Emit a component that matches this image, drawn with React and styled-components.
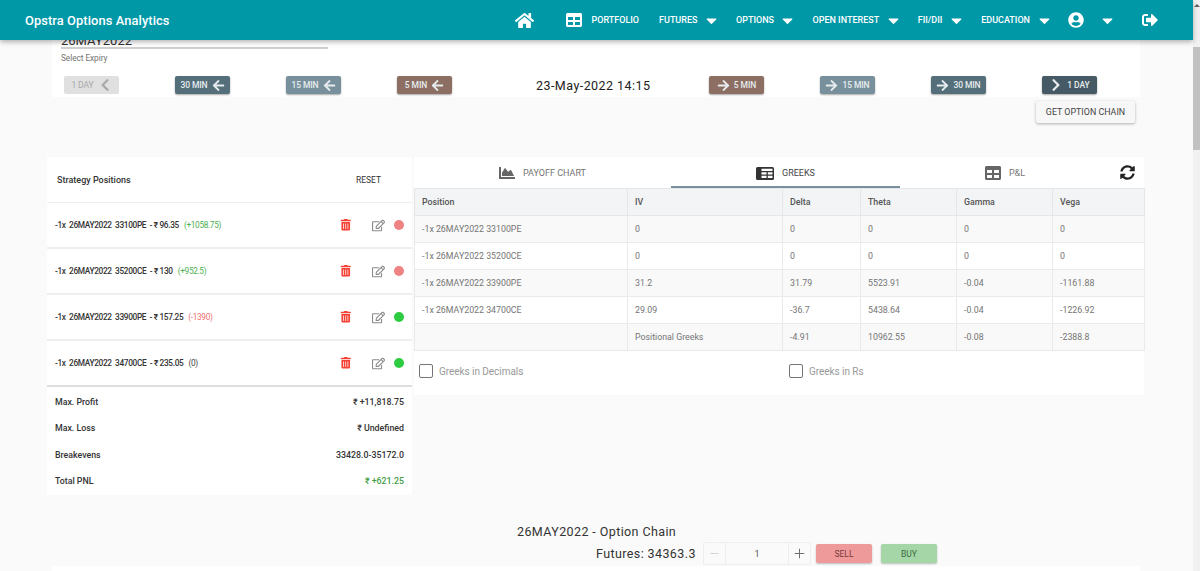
import styled, { createGlobalStyle } from "styled-components";
import {
  FaHome,
  FaTable,
  FaCaretDown,
  FaUserCircle,
  FaSignOutAlt,
  FaArrowLeft,
  FaArrowRight,
  FaChevronLeft,
  FaChevronRight,
  FaChartArea,
  FaSyncAlt,
  FaTrashAlt,
  FaRegEdit,
} from "react-icons/fa";
import { Plus, Minus } from "lucide-react";

const GlobalStyle = createGlobalStyle`
  html, body { margin: 0; height: 100%; overflow: hidden; }
  body { font-family: Roboto, "Noto Sans", sans-serif; background: #fafafa; }
  * { box-sizing: border-box; }
`;

const Shell = styled.div`
  display: flex;
  width: 1200px;
  height: 571px;
  overflow: hidden;
`;

const Page = styled.div`
  flex: 1;
  min-width: 0;
  display: flex;
  flex-direction: column;
  background: #fafafa;
  > * {
    flex: none;
  }
`;

const ScrollTrack = styled.div`
  width: 7px;
  background: #f1f1f1;
  display: flex;
  flex-direction: column;
  align-items: center;
`;

const ScrollArrow = styled.div`
  margin-top: 4px;
  width: 0;
  height: 0;
  border-left: 3px solid transparent;
  border-right: 3px solid transparent;
  border-bottom: 3px solid #606060;
`;

const ScrollThumb = styled.div`
  margin-top: 40px;
  width: 100%;
  height: 103px;
  background: #c1c1c1;
`;

const Header = styled.header`
  position: relative;
  z-index: 10;
  height: 40px;
  background: #0097a7;
  box-shadow: 0 2px 5px rgba(0, 0, 0, 0.3);
  display: flex;
  align-items: center;
  padding: 0 35px 0 25px;
  color: #fff;
`;

const Brand = styled.div`
  font-size: 12.85px;
  font-weight: 500;
  letter-spacing: 0.1px;
`;

const Nav = styled.nav`
  margin-left: auto;
  display: flex;
  align-items: center;
  height: 100%;
`;

const NavItem = styled.div`
  display: flex;
  align-items: center;
  gap: ${(p) => p.$gap ?? 5.5}px;
  margin-left: ${(p) => p.$left ?? 16}px;
  font-size: 9px;
  font-weight: 500;
  white-space: nowrap;
  svg {
    display: block;
    flex: none;
  }
`;

const Expiry = styled.section`
  width: 1088px;
  margin: -2px 0 0 52px;
  height: 59px;
  background: #fff;
  padding: 0 9px;
`;

const ExpiryValue = styled.div`
  width: 267px;
  height: 11px;
  border-bottom: 2px solid #cfcfcf;
  overflow: hidden;
  font-size: 13px;
  line-height: 6px;
  color: #333;
`;

const ExpiryLabel = styled.div`
  margin-top: 4px;
  font-size: 8.4px;
  letter-spacing: -0.1px;
  color: #757575;
`;

const StepRow = styled.div`
  margin-top: 13px;
  padding-left: 3px;
  display: flex;
  align-items: center;
  gap: 56px;
`;

const StepButton = styled.div`
  flex: none;
  width: 55px;
  height: 18px;
  border-radius: 2px;
  background: ${(p) => p.$bg};
  color: ${(p) => (p.$off ? "#a8a8a8" : "#e6ecee")};
  box-shadow: ${(p) => (p.$off ? "none" : "0 1px 2px rgba(0,0,0,.35)")};
  display: flex;
  align-items: center;
  justify-content: center;
  gap: 4px;
  font-size: 8.5px;
  letter-spacing: -0.1px;
  font-weight: ${(p) => (p.$off ? 400 : 500)};
  svg {
    display: block;
    flex: none;
  }
`;

const DateLabel = styled.div`
  flex: none;
  width: 145px;
  padding-left: 28px;
  font-size: 12.5px;
  letter-spacing: 0.45px;
  color: #222;
  white-space: nowrap;
`;

const ChainRow = styled.div`
  display: flex;
  justify-content: flex-end;
  padding: 4px 58px 0 0;
`;

const ChainButton = styled.div`
  width: 99px;
  height: 22px;
  display: flex;
  align-items: center;
  justify-content: center;
  background: #f7f7f7;
  border-radius: 2px;
  box-shadow: 0 1px 3px rgba(0, 0, 0, 0.3);
  font-size: 8.9px;
  color: #444;
`;

const Main = styled.main`
  margin: 34px 0 0 47px;
  display: flex;
  align-items: flex-start;
  gap: 2px;
`;

const LeftCard = styled.section`
  flex: none;
  width: 365px;
  height: 338px;
  background: #fff;
`;

const CardTitle = styled.div`
  height: 46px;
  display: flex;
  align-items: center;
  justify-content: space-between;
  padding: 0 31px 0 10px;
  font-size: 9px;
  font-weight: 500;
  color: #333;
  border-bottom: 1px solid #efefef;
`;

const Reset = styled.span`
  font-size: 8.5px;
  font-weight: 400;
`;

const Position = styled.div`
  height: 46px;
  display: flex;
  align-items: center;
  padding-left: 8px;
  border-bottom: 2px solid ${(p) => (p.$last ? "#dedede" : "#efefef")};
  font-size: 8.3px;
  letter-spacing: -0.35px;
  font-weight: 500;
  color: #333;
  white-space: pre;
`;

const Pnl = styled.span`
  margin-left: 5px;
  font-weight: 400;
  color: ${(p) => p.$color};
`;

const RowIcons = styled.div`
  margin-left: auto;
  display: flex;
  align-items: center;
  padding-right: 8px;
  svg {
    display: block;
  }
`;

const Trash = styled(FaTrashAlt)`
  color: #f44336;
  font-size: 11.5px;
`;

const Edit = styled(FaRegEdit)`
  margin-left: 21px;
  color: #8a8a8a;
  font-size: 13px;
`;

const Dot = styled.span`
  margin-left: 9px;
  width: 10px;
  height: 10px;
  border-radius: 50%;
  background: ${(p) => p.$color};
`;

const Summary = styled.div`
  padding-top: 1.5px;
`;

const SummaryRow = styled.div`
  height: 26.5px;
  display: flex;
  align-items: center;
  justify-content: space-between;
  padding: 0 8px;
  font-size: 8.8px;
  font-weight: 500;
  color: #333;
`;

const SummaryValue = styled.span`
  color: ${(p) => p.$color || "#333"};
`;

const RightCard = styled.section`
  flex: none;
  width: 730px;
  height: 238px;
  background: #fff;
`;

const Tabs = styled.div`
  height: 31px;
  display: grid;
  grid-template-columns: 257px 229px 210px 34px;
`;

const Tab = styled.div`
  display: flex;
  align-items: center;
  justify-content: center;
  gap: 8px;
  padding-top: 3px;
  font-size: 9px;
  color: ${(p) => (p.$active ? "#444" : "#757575")};
  border-bottom: 2px solid ${(p) => (p.$active ? "#78909c" : "transparent")};
  svg {
    display: block;
    color: ${(p) => (p.$active ? "#333" : "#666")};
  }
`;

const Refresh = styled.div`
  display: flex;
  align-items: center;
  justify-content: center;
  color: #222;
  font-size: 15px;
`;

const Table = styled.table`
  width: 730px;
  table-layout: fixed;
  border-collapse: collapse;
  font-size: 8.8px;
  color: #757575;
`;

const Th = styled.th`
  height: 27px;
  padding: 0 7px;
  text-align: left;
  font-weight: 500;
  color: #555;
  background: #f3f4f6;
  border: 1px solid #e4e6ea;
`;

const Td = styled.td`
  height: 27px;
  padding: 0 7px;
  border: 1px solid #e9eaed;
  background: ${(p) => (p.$odd ? "#f9f9f9" : "#fff")};
`;

const Checks = styled.div`
  display: grid;
  grid-template-columns: 370px 1fr;
  padding: 13px 0 0 5px;
`;

const Check = styled.label`
  display: flex;
  align-items: center;
  gap: 6px;
  font-size: 10px;
  letter-spacing: -0.05px;
  color: #999;
`;

const Box = styled.span`
  width: 14px;
  height: 14px;
  border: 1.5px solid #757575;
  border-radius: 2px;
`;

const Chain = styled.section`
  margin-top: 29px;
`;

const ChainTitle = styled.div`
  padding-left: 517px;
  font-size: 12.5px;
  letter-spacing: 0.4px;
  color: #333;
`;

const OrderRow = styled.div`
  margin-top: 3px;
  padding-left: 596px;
  display: flex;
  align-items: center;
`;

const Futures = styled.div`
  width: 107px;
  font-size: 12.5px;
  letter-spacing: 0.4px;
  color: #333;
`;

const Stepper = styled.div`
  width: 108px;
  height: 23px;
  display: grid;
  grid-template-columns: 22px 1fr 22px;
  border: 1px solid #eee;
  border-radius: 2px;
`;

const StepCell = styled.div`
  display: flex;
  align-items: center;
  justify-content: center;
  font-size: 9px;
  color: ${(p) => p.$color || "#555"};
  border-left: ${(p) => (p.$divide ? "1px solid #eee" : "none")};
  border-right: ${(p) => (p.$divideRight ? "1px solid #eee" : "none")};
`;

const Trade = styled.div`
  margin-left: ${(p) => p.$left}px;
  width: 56px;
  height: 19px;
  display: flex;
  align-items: center;
  justify-content: center;
  border-radius: 2px;
  background: ${(p) => p.$bg};
  box-shadow: 0 1px 2px rgba(0, 0, 0, 0.25);
  font-size: 8.5px;
  color: ${(p) => p.$color};
`;

const NextPanel = styled.div`
  margin: 1px 53px 0 52px;
  height: 10px;
  background: #fff;
`;

const GreeksIcon = () => (
  <svg width="18" height="13" viewBox="0 0 18 13">
    <rect width="18" height="13" rx="1.5" fill="currentColor" />
    <path
      d="M5.5 1.8h11v2.3h-11zM5.5 5.3h5v2.3h-5zM11.8 5.3h4.7v2.3h-4.7zM5.5 8.8h5v2.3h-5zM11.8 8.8h4.7v2.3h-4.7z"
      fill="#fff"
    />
  </svg>
);

const caret = <FaCaretDown size={17} />;

const leftSteps = [
  { label: "30 MIN", bg: "#546e7a" },
  { label: "15 MIN", bg: "#78909c" },
  { label: "5 MIN", bg: "#8d6e63" },
];

const rightSteps = [
  { label: "5 MIN", bg: "#8d6e63" },
  { label: "15 MIN", bg: "#78909c" },
  { label: "30 MIN", bg: "#546e7a" },
];

const positions = [
  { text: "-1x  26MAY2022  33100PE  - ₹ 96.35", pnl: "(+1058.75)", color: "#4caf50", dot: "#ef8282" },
  { text: "-1x  26MAY2022  35200CE  - ₹ 130", pnl: "(+952.5)", color: "#4caf50", dot: "#ef8282" },
  { text: "-1x  26MAY2022  33900PE  - ₹ 157.25", pnl: "(-1390)", color: "#ef7070", dot: "#2ecc40" },
  { text: "-1x  26MAY2022  34700CE  - ₹ 235.05", pnl: "(0)", color: "#444", dot: "#2ecc40" },
];

const summary = [
  { label: "Max. Profit", value: "₹ +11,818.75" },
  { label: "Max. Loss", value: "₹ Undefined" },
  { label: "Breakevens", value: "33428.0-35172.0" },
  { label: "Total PNL", value: "₹ +621.25", color: "#43a047" },
];

const greeks = [
  ["-1x 26MAY2022 33100PE", "0", "0", "0", "0", "0"],
  ["-1x 26MAY2022 35200CE", "0", "0", "0", "0", "0"],
  ["-1x 26MAY2022 33900PE", "31.2", "31.79", "5523.91", "-0.04", "-1161.88"],
  ["-1x 26MAY2022 34700CE", "29.09", "-36.7", "5438.64", "-0.04", "-1226.92"],
  ["", "Positional Greeks", "-4.91", "10962.55", "-0.08", "-2388.8"],
];

const columns = [213, 155, 78, 96, 96, 92];
const headings = ["Position", "IV", "Delta", "Theta", "Gamma", "Vega"];

export default function App() {
  return (
    <Shell>
      <GlobalStyle />
      <Page>
        <Header>
          <Brand>Opstra Options Analytics</Brand>
          <Nav>
            <NavItem $left={0}>
              <FaHome size={19} />
            </NavItem>
            <NavItem $left={32} $gap={9}>
              <FaTable size={16} />
              PORTFOLIO
            </NavItem>
            <NavItem $left={20}>FUTURES{caret}</NavItem>
            <NavItem>OPTIONS{caret}</NavItem>
            <NavItem>OPEN INTEREST{caret}</NavItem>
            <NavItem>FII/DII{caret}</NavItem>
            <NavItem $left={16.5}>EDUCATION{caret}</NavItem>
            <NavItem $left={15.5} $gap={14.5}>
              <FaUserCircle size={16} />
              {caret}
            </NavItem>
            <NavItem $left={26.5}>
              <FaSignOutAlt size={16} />
            </NavItem>
          </Nav>
        </Header>

        <Expiry>
          <ExpiryValue>26MAY2022</ExpiryValue>
          <ExpiryLabel>Select Expiry</ExpiryLabel>
          <StepRow>
            <StepButton $bg="#e0e0e0" $off>
              1 DAY <FaChevronLeft size={14} />
            </StepButton>
            {leftSteps.map((s) => (
              <StepButton key={s.label} $bg={s.bg}>
                {s.label} <FaArrowLeft size={13} />
              </StepButton>
            ))}
            <DateLabel>23-May-2022 14:15</DateLabel>
            {rightSteps.map((s) => (
              <StepButton key={s.label} $bg={s.bg}>
                <FaArrowRight size={13} /> {s.label}
              </StepButton>
            ))}
            <StepButton $bg="#455a64">
              <FaChevronRight size={14} /> 1 DAY
            </StepButton>
          </StepRow>
        </Expiry>

        <ChainRow>
          <ChainButton>GET OPTION CHAIN</ChainButton>
        </ChainRow>

        <Main>
          <LeftCard>
            <CardTitle>
              Strategy Positions
              <Reset>RESET</Reset>
            </CardTitle>
            {positions.map((p, i) => (
              <Position key={p.text} $last={i === positions.length - 1}>
                {p.text}
                <Pnl $color={p.color}>{p.pnl}</Pnl>
                <RowIcons>
                  <Trash />
                  <Edit />
                  <Dot $color={p.dot} />
                </RowIcons>
              </Position>
            ))}
            <Summary>
              {summary.map((s) => (
                <SummaryRow key={s.label}>
                  {s.label}
                  <SummaryValue $color={s.color}>{s.value}</SummaryValue>
                </SummaryRow>
              ))}
            </Summary>
          </LeftCard>

          <RightCard>
            <Tabs>
              <Tab>
                <FaChartArea size={16} />
                PAYOFF CHART
              </Tab>
              <Tab $active>
                <GreeksIcon />
                GREEKS
              </Tab>
              <Tab>
                <FaTable size={16} />
                P&amp;L
              </Tab>
              <Refresh>
                <FaSyncAlt />
              </Refresh>
            </Tabs>
            <Table>
              <colgroup>
                {columns.map((w, i) => (
                  <col key={i} width={w} />
                ))}
              </colgroup>
              <thead>
                <tr>
                  {headings.map((h) => (
                    <Th key={h}>{h}</Th>
                  ))}
                </tr>
              </thead>
              <tbody>
                {greeks.map((row, r) => (
                  <tr key={r}>
                    {row.map((cell, c) => (
                      <Td key={c} $odd={r % 2 === 0}>
                        {cell}
                      </Td>
                    ))}
                  </tr>
                ))}
              </tbody>
            </Table>
            <Checks>
              <Check>
                <Box />
                Greeks in Decimals
              </Check>
              <Check>
                <Box />
                Greeks in Rs
              </Check>
            </Checks>
          </RightCard>
        </Main>

        <Chain>
          <ChainTitle>26MAY2022 - Option Chain</ChainTitle>
          <OrderRow>
            <Futures>Futures: 34363.3</Futures>
            <Stepper>
              <StepCell $divideRight $color="#ccc">
                <Minus size={13} strokeWidth={1.5} />
              </StepCell>
              <StepCell>1</StepCell>
              <StepCell $divide $color="#666">
                <Plus size={15} strokeWidth={1.5} />
              </StepCell>
            </Stepper>
            <Trade $left={5} $bg="#ef9a9a" $color="#7a3b3b">
              SELL
            </Trade>
            <Trade $left={9} $bg="#a5d6a7" $color="#3d6b40">
              BUY
            </Trade>
          </OrderRow>
          <NextPanel />
        </Chain>
      </Page>
      <ScrollTrack>
        <ScrollArrow />
        <ScrollThumb />
      </ScrollTrack>
    </Shell>
  );
}
